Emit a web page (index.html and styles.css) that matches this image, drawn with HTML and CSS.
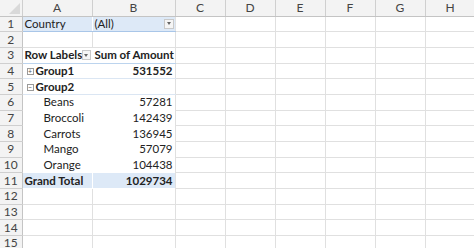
FILE: index.html
```html
<!DOCTYPE html>
<html lang="en">
<head>
    <meta charset="UTF-8">
    <title>Pivot Table</title>
    <link rel="stylesheet" href="styles.css">
</head>
<body>
    <table class="sheet">
        <colgroup>
            <col class="col-head">
            <col class="col-a">
            <col class="col-b">
            <col class="col-n"><col class="col-n"><col class="col-n">
            <col class="col-n"><col class="col-n"><col class="col-n">
        </colgroup>
        <thead>
            <tr class="letters">
                <th class="corner"><span class="corner-mark"></span></th>
                <th>A</th><th>B</th><th>C</th><th>D</th><th>E</th><th>F</th><th>G</th><th>H</th>
            </tr>
        </thead>
        <tbody>
            <tr>
                <th>1</th>
                <td class="filter filter-a">Country</td>
                <td class="filter"><div class="with-btn">(All)<span class="drop"></span></div></td>
                <td></td><td></td><td></td><td></td><td></td><td></td>
            </tr>
            <tr>
                <th>2</th>
                <td></td><td></td><td></td><td></td><td></td><td></td><td></td><td></td>
            </tr>
            <tr>
                <th>3</th>
                <td class="pv pv-head bold"><div class="with-btn">Row Labels<span class="drop"></span></div></td>
                <td class="pv pv-head bold num-left">Sum of Amount</td>
                <td></td><td></td><td></td><td></td><td></td><td></td>
            </tr>
            <tr>
                <th>4</th>
                <td class="pv pv-line bold"><span class="tog">+</span>Group1</td>
                <td class="pv pv-line bold num">531552</td>
                <td></td><td></td><td></td><td></td><td></td><td></td>
            </tr>
            <tr>
                <th>5</th>
                <td class="pv pv-line bold"><span class="tog">&minus;</span>Group2</td>
                <td class="pv pv-line num"></td>
                <td></td><td></td><td></td><td></td><td></td><td></td>
            </tr>
            <tr>
                <th>6</th>
                <td class="pv item">Beans</td>
                <td class="pv num">57281</td>
                <td></td><td></td><td></td><td></td><td></td><td></td>
            </tr>
            <tr>
                <th>7</th>
                <td class="pv item">Broccoli</td>
                <td class="pv num">142439</td>
                <td></td><td></td><td></td><td></td><td></td><td></td>
            </tr>
            <tr>
                <th>8</th>
                <td class="pv item">Carrots</td>
                <td class="pv num">136945</td>
                <td></td><td></td><td></td><td></td><td></td><td></td>
            </tr>
            <tr>
                <th>9</th>
                <td class="pv item">Mango</td>
                <td class="pv num">57079</td>
                <td></td><td></td><td></td><td></td><td></td><td></td>
            </tr>
            <tr>
                <th>10</th>
                <td class="pv item">Orange</td>
                <td class="pv num">104438</td>
                <td></td><td></td><td></td><td></td><td></td><td></td>
            </tr>
            <tr>
                <th>11</th>
                <td class="pv total bold">Grand Total</td>
                <td class="pv total bold num">1029734</td>
                <td></td><td></td><td></td><td></td><td></td><td></td>
            </tr>
            <tr>
                <th>12</th>
                <td></td><td></td><td></td><td></td><td></td><td></td><td></td><td></td>
            </tr>
            <tr>
                <th>13</th>
                <td></td><td></td><td></td><td></td><td></td><td></td><td></td><td></td>
            </tr>
            <tr>
                <th>14</th>
                <td></td><td></td><td></td><td></td><td></td><td></td><td></td><td></td>
            </tr>
            <tr>
                <th>15</th>
                <td></td><td></td><td></td><td></td><td></td><td></td><td></td><td></td>
            </tr>
        </tbody>
    </table>
</body>
</html>
```

FILE: styles.css
```css
body {
    margin: 0;
    background: #fff;
    font-family: 'Lato', 'Liberation Sans', sans-serif;
    font-size: 11.5px;
    color: #222;
    overflow: hidden;
}
.sheet {
    border-collapse: collapse;
    table-layout: fixed;
    width: 475px;
}
.col-head { width: 22px; }
.col-a { width: 70px; }
.col-b { width: 83px; }
.col-n { width: 50px; }
tr {
    height: 15.7px;
}
.letters {
    height: 16px;
}
th, td {
    padding: 0 2px;
    border-right: 1px solid #e0e0e0;
    border-bottom: 1px solid #e0e0e0;
    white-space: nowrap;
    overflow: hidden;
    line-height: 14px;
}
th {
    font-weight: normal;
    background: #f3f3f3;
    color: #444;
    text-align: center;
    border-color: #cfcfcf;
    font-size: 12px;
}
.letters th {
    border-bottom-color: #c4c4c4;
}
tbody th {
    border-right-color: #c4c4c4;
}
.corner {
    position: relative;
}
.corner-mark {
    position: absolute;
    right: 2px;
    bottom: 2px;
    width: 0;
    height: 0;
    border-left: 11px solid transparent;
    border-bottom: 11px solid #d9d9d9;
}
.bold {
    font-weight: bold;
}
.filter {
    background: #dde9f7;
    border-bottom-color: #a9c6e8;
}
.filter-a {
    border-right-color: #fff;
}
.with-btn {
    display: flex;
    align-items: center;
    justify-content: space-between;
}
.drop {
    width: 10px;
    height: 10px;
    box-sizing: border-box;
    border: 1px solid #c9c9c9;
    background: #f5f5f5;
    display: inline-flex;
    align-items: center;
    justify-content: center;
    margin-right: -1px;
}
.drop::after {
    content: "";
    border-left: 2.5px solid transparent;
    border-right: 2.5px solid transparent;
    border-top: 3px solid #666;
}
.pv {
    border-right-color: transparent;
    border-bottom-color: transparent;
}
.pv + .pv {
    border-right-color: #e0e0e0;
}
.pv-head {
    border-bottom-color: #bcd4ee;
}
.pv-line {
    border-bottom-color: #dbe6f3;
}
.num {
    text-align: right;
}
.num-left {
    text-align: left;
}
.tog {
    display: inline-block;
    width: 7px;
    height: 7px;
    box-sizing: border-box;
    border: 1px solid #9a9a9a;
    font-size: 7px;
    line-height: 5px;
    text-align: center;
    color: #555;
    font-weight: normal;
    margin: 0 2px 0 2px;
    vertical-align: 1px;
}
.item {
    padding-left: 21px;
}
.total {
    background: #dde9f7;
    border-top: 1px solid #a9c6e8;
}
```
